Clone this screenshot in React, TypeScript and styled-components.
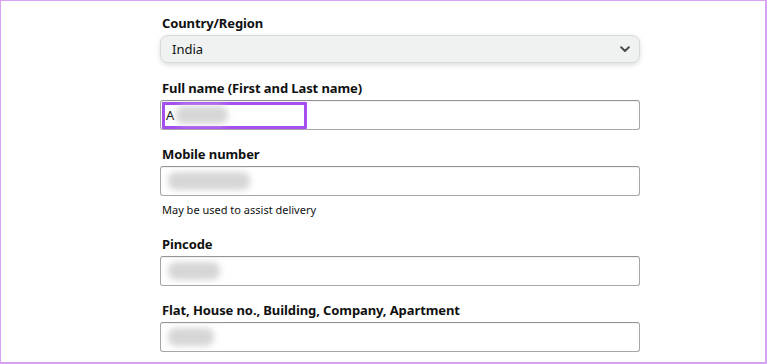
import React from 'react';
import styled, { createGlobalStyle } from 'styled-components';

const GlobalStyle = createGlobalStyle`
  html, body {
    margin: 0;
    padding: 0;
    background: #ffffff;
  }
  body {
    font-family: "Noto Sans", "Liberation Sans", Arial, sans-serif;
    color: #0f1111;
  }
`;

const Frame = styled.div`
  box-sizing: border-box;
  width: 767px;
  height: 364px;
  border-style: solid;
  border-color: #d6a3f3;
  border-width: 1px 2px 2px 1px;
  overflow: hidden;
  padding: 13px 0 0 159px;
`;

const Form = styled.form`
  width: 480px;
  display: flex;
  flex-direction: column;
`;

const Field = styled.div<{ $gap?: number }>`
  display: flex;
  flex-direction: column;
  margin-bottom: ${(p) => (p.$gap ?? 15)}px;
`;

const Label = styled.label`
  display: block;
  font-size: 13px;
  line-height: 18px;
  font-weight: 700;
  letter-spacing: -0.1px;
  color: #0f1111;
  margin: 0 0 3px 2px;
`;

const SelectBox = styled.div`
  box-sizing: border-box;
  height: 28px;
  display: flex;
  align-items: center;
  justify-content: space-between;
  padding: 0 9px 0 11px;
  background: #f0f2f2;
  border: 1px solid #d5d9d9;
  border-radius: 8px;
  box-shadow: 0 2px 5px rgba(15, 17, 17, 0.15);
  font-size: 13px;
  color: #0f1111;
`;

const InputBox = styled.div`
  position: relative;
  box-sizing: border-box;
  height: 30px;
  display: flex;
  align-items: center;
  padding: 0 5px;
  background: #fff;
  border: 1px solid #a6a6a6;
  border-top-color: #949494;
  border-radius: 3px;
  box-shadow: inset 0 1px 0 rgba(0, 0, 0, 0.05);
  font-size: 13px;
  color: #0f1111;
`;

const FocusRing = styled.span`
  position: absolute;
  left: 1px;
  top: 1px;
  width: 145px;
  height: 27px;
  box-sizing: border-box;
  border: 3px solid #a64ff0;
  border-radius: 1px;
`;

const Blurred = styled.span<{ $w: number }>`
  display: inline-block;
  width: ${(p) => p.$w}px;
  height: 18px;
  background: #d6d6d6;
  border-radius: 8px;
  filter: blur(3px);
  margin-left: 2px;
`;

const Hint = styled.div`
  font-size: 11px;
  line-height: 16px;
  color: #0f1111;
  margin: 6px 0 17px 2px;
`;

const Chevron = () => (
  <svg width="10" height="7" viewBox="0 0 10 7">
    <path d="M1.2 1.3 L5 5 L8.8 1.3" fill="none" stroke="#4a4d4d" strokeWidth="2" strokeLinecap="round" strokeLinejoin="round" />
  </svg>
);

export default function App() {
  return (
    <>
      <GlobalStyle />
      <Frame>
        <Form>
          <Field $gap={16}>
            <Label>Country/Region</Label>
            <SelectBox>
              <span>India</span>
              <Chevron />
            </SelectBox>
          </Field>
          <Field>
            <Label>Full name (First and Last name)</Label>
            <InputBox>
              <FocusRing />
              <span>A</span>
              <Blurred $w={52} />
            </InputBox>
          </Field>
          <Field $gap={0}>
            <Label>Mobile number</Label>
            <InputBox>
              <Blurred $w={82} />
            </InputBox>
          </Field>
          <Hint>May be used to assist delivery</Hint>
          <Field>
            <Label>Pincode</Label>
            <InputBox>
              <Blurred $w={52} />
            </InputBox>
          </Field>
          <Field>
            <Label>Flat, House no., Building, Company, Apartment</Label>
            <InputBox>
              <Blurred $w={46} />
            </InputBox>
          </Field>
        </Form>
      </Frame>
    </>
  );
}
